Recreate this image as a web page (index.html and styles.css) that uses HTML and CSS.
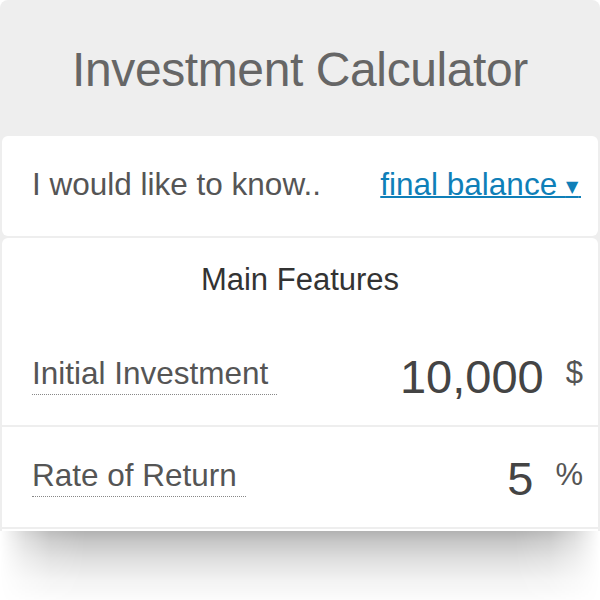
FILE: index.html
```html
<!DOCTYPE html>
<html lang="en">
<head>
<meta charset="utf-8">
<title>Investment Calculator</title>
<link rel="stylesheet" href="styles.css">
</head>
<body>
<div class="calc">
  <h1 class="title">Investment Calculator</h1>
  <div class="card know">
    <span class="know-label">I would like to know..</span>
    <span class="select">final balance <span class="caret">▼</span><span class="tail">&nbsp;</span></span>
  </div>
  <div class="card section">
    <h2 class="section-title">Main Features</h2>
    <div class="row">
      <span class="label">Initial Investment</span>
      <div class="amount"><span class="value">10,000</span><span class="unit">$</span></div>
    </div>
    <div class="row">
      <span class="label">Rate of Return</span>
      <div class="amount"><span class="value">5</span><span class="unit">%</span></div>
    </div>
    <div class="row"></div>
  </div>
</div>
<div class="shadow"></div>
</body>
</html>
```
FILE: styles.css
```css
body {
  margin: 0;
  background: #fff;
  font-family: "Liberation Sans", Arial, sans-serif;
}

.calc {
  width: 600px;
  height: 531px;
  box-sizing: border-box;
  padding: 0 2px;
  background: #eee;
  border-radius: 8px 8px 0 0;
  overflow: hidden;
}

.shadow {
  width: 600px;
  height: 69px;
  background: linear-gradient(to bottom,
    rgba(0, 0, 0, 0.30) 0,
    rgba(0, 0, 0, 0.22) 15%,
    rgba(0, 0, 0, 0.13) 40%,
    rgba(0, 0, 0, 0.05) 70%,
    rgba(0, 0, 0, 0.01) 100%);
  -webkit-mask-image: linear-gradient(to right,
    transparent 0,
    rgba(0, 0, 0, 0.5) 25px,
    rgba(0, 0, 0, 0.85) 50px,
    #000 85px,
    #000 515px,
    rgba(0, 0, 0, 0.85) 550px,
    rgba(0, 0, 0, 0.5) 575px,
    transparent 600px);
  mask-image: linear-gradient(to right,
    transparent 0,
    rgba(0, 0, 0, 0.5) 25px,
    rgba(0, 0, 0, 0.85) 50px,
    #000 85px,
    #000 515px,
    rgba(0, 0, 0, 0.85) 550px,
    rgba(0, 0, 0, 0.5) 575px,
    transparent 600px);
}

.title {
  margin: 0;
  padding-top: 3px;
  height: 133px;
  line-height: 133px;
  font-size: 48px;
  letter-spacing: -0.4px;
  font-weight: normal;
  color: #666;
  text-align: center;
}

.card {
  background: #fff;
  border-radius: 6px;
}

.know {
  height: 100px;
  box-sizing: border-box;
  display: flex;
  align-items: center;
  justify-content: space-between;
  padding: 0 17px 4px 30px;
  margin-bottom: 2px;
  font-size: 31.5px;
  color: #555;
}

.select {
  color: #0f7fb8;
  text-decoration: underline;
  text-decoration-thickness: 2px;
}

.caret {
  font-family: "DejaVu Sans", sans-serif;
  font-size: 16px;
  vertical-align: 3px;
}

.tail {
  font-size: 10px;
}

.section {
  border-radius: 6px 6px 0 0;
}

.section-title {
  margin: 0;
  padding: 24px 0 27px;
  line-height: 36px;
  font-size: 31px;
  font-weight: normal;
  color: #333;
  text-align: center;
}

.row {
  height: 100px;
  display: flex;
  justify-content: space-between;
  align-items: flex-start;
  padding: 0 15px 0 30px;
}

.row + .row {
  border-top: 2px solid #eee;
}

.label {
  margin-top: 30px;
  padding: 0 9px 3px 0;
  font-size: 31.5px;
  line-height: 36px;
  color: #555;
  border-bottom: 1px dotted #888;
}

.amount {
  display: flex;
  align-items: flex-start;
}

.value {
  margin-top: 28px;
  font-size: 47px;
  line-height: 47px;
  color: #444;
}

.unit {
  margin-top: 30px;
  margin-left: 22px;
  font-size: 31px;
  line-height: 36px;
  color: #555;
}
```
